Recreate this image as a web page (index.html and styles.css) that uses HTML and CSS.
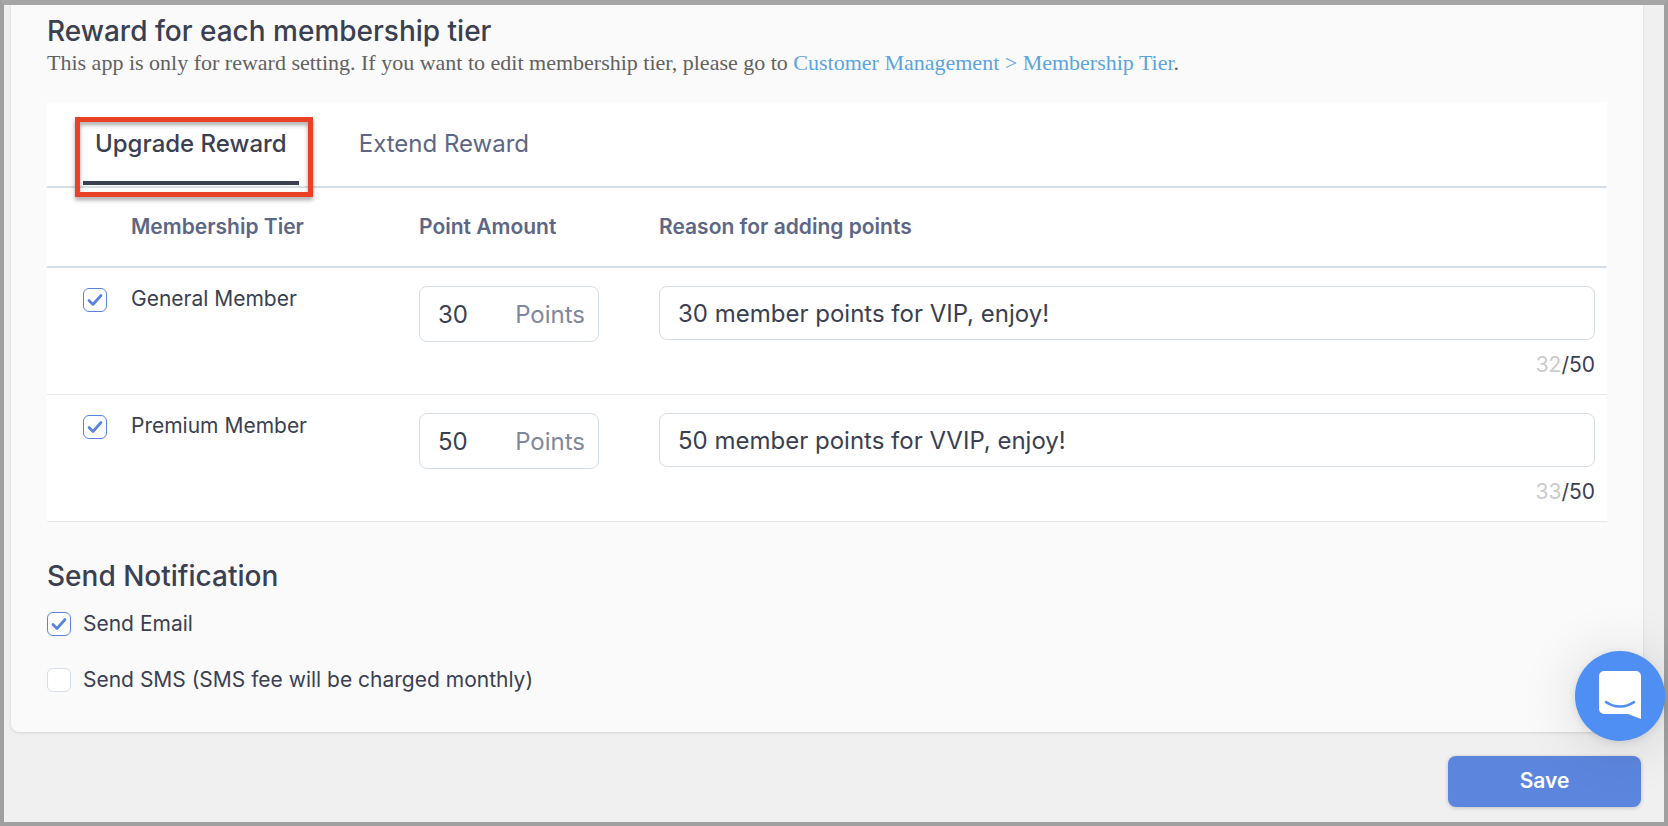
FILE: index.html
```html
<!DOCTYPE html>
<html lang="en">
<head>
  <meta charset="UTF-8" />
  <meta name="viewport" content="width=device-width, initial-scale=1" />
  <title>Membership Reward Settings</title>
  <link rel="stylesheet" href="styles.css">
</head>
<body>
  <main class="card">
    <section>
      <h2>Reward for each membership tier</h2>
      <p class="hint">This app is only for reward setting. If you want to edit membership tier, please go to <a href="#">Customer Management &gt; Membership Tier</a>.</p>

      <div class="reward-panel">
        <div class="tabs" role="tablist">
          <button class="tab active" type="button" role="tab" aria-selected="true">Upgrade Reward</button>
          <button class="tab" type="button" role="tab" aria-selected="false">Extend Reward</button>
        </div>

        <table>
          <thead>
            <tr>
              <th class="col-check"></th>
              <th class="col-tier">Membership Tier</th>
              <th class="col-points">Point Amount</th>
              <th>Reason for adding points</th>
            </tr>
          </thead>
          <tbody>
            <tr>
              <td class="col-check"><input class="checkbox" type="checkbox" id="tier-general" checked></td>
              <td><label for="tier-general">General Member</label></td>
              <td>
                <div class="point-box">
                  <input type="text" id="points-general" value="30" aria-label="General Member points">
                  <label for="points-general">Points</label>
                </div>
              </td>
              <td class="col-reason">
                <input class="reason" type="text" value="30 member points for VIP, enjoy!" maxlength="50" aria-label="Reason for General Member">
                <div class="counter"><span>32</span>/50</div>
              </td>
            </tr>
            <tr>
              <td class="col-check"><input class="checkbox" type="checkbox" id="tier-premium" checked></td>
              <td><label for="tier-premium">Premium Member</label></td>
              <td>
                <div class="point-box">
                  <input type="text" id="points-premium" value="50" aria-label="Premium Member points">
                  <label for="points-premium">Points</label>
                </div>
              </td>
              <td class="col-reason">
                <input class="reason" type="text" value="50 member points for VVIP, enjoy!" maxlength="50" aria-label="Reason for Premium Member">
                <div class="counter"><span>33</span>/50</div>
              </td>
            </tr>
          </tbody>
        </table>
      </div>
    </section>

    <section class="notification">
      <h2>Send Notification</h2>
      <div class="option">
        <input class="checkbox" type="checkbox" id="send-email" checked>
        <label for="send-email">Send Email</label>
      </div>
      <div class="option">
        <input class="checkbox" type="checkbox" id="send-sms">
        <label for="send-sms">Send SMS (SMS fee will be charged monthly)</label>
      </div>
    </section>
  </main>

  <footer>
    <button class="save-btn" type="button">Save</button>
  </footer>

  <button class="chat-btn" type="button" aria-label="Open chat">
    <svg width="42" height="48" viewBox="0 0 42 48">
      <path d="M5 0h32a5 5 0 0 1 5 5v43L29 43H5a5 5 0 0 1-5-5V5a5 5 0 0 1 5-5z" fill="#fff"/>
      <path d="M7 31c8 6 20 6 28 0" fill="none" stroke="#4f8ff3" stroke-width="2.6" stroke-linecap="round"/>
    </svg>
  </button>
</body>
</html>
```

FILE: styles.css
```css
* {
  box-sizing: border-box;
}
body {
  font-family: Inter, "Liberation Sans", sans-serif;
  font-size: 21px;
  line-height: 26px;
  background: #f0f0f0;
  margin: 0;
  color: #3a3f51;
  min-height: 100vh;
  border: 4px solid #a0a0a0;
  border-top: 5px solid #a6a6a6;
}
button, input {
  font-family: inherit;
  color: inherit;
}
h2 {
  margin: 0;
  font-size: 28px;
  line-height: 36px;
  font-weight: 500;
}

.card {
  margin: 0 21px 0 7px;
  padding: 8px 36px 39px;
  background: #fafafa;
  border-radius: 0 0 8px 8px;
  box-shadow: 0 1px 3px rgba(0,0,0,0.12);
}
.hint {
  margin: 0 0 25px;
  font-family: "Liberation Serif", serif;
  font-size: 22px;
  line-height: 28px;
  color: #616161;
}
.hint a {
  color: #5ba4de;
  text-decoration: none;
}

/* Tabs */
.reward-panel {
  background: white;
}
.tabs {
  display: flex;
  gap: 48px;
  padding: 0 36px 1px;
  border-bottom: 2px solid #d5dde6;
}
.tab {
  position: relative;
  height: 83px;
  padding: 4px 12px 0;
  background: none;
  border: none;
  border-bottom: 4px solid transparent;
  font-size: 24px;
  color: #5d6685;
  cursor: pointer;
}
.tab.active {
  color: #3a3f51;
  font-weight: 500;
  border-bottom-color: #3a3f51;
}
/* Red frame that marks the current tab */
.tab.active::after {
  content: "";
  position: absolute;
  top: 15px;
  right: -14px;
  bottom: -16px;
  left: -8px;
  border: 5px solid #ea4025;
  filter: drop-shadow(0 3px 2px rgba(0,0,0,0.35));
}

/* Tier table */
table {
  width: 100%;
  table-layout: fixed;
  border-collapse: separate;
  border-spacing: 0;
}
th {
  height: 80px;
  padding: 0;
  text-align: left;
  font-weight: 600;
  color: #5d6685;
  border-bottom: 2px solid #d5dde6;
}
td {
  padding: 18px 0 16px;
  vertical-align: top;
  border-bottom: 1px solid #e4e8ed;
}
.col-check {
  width: 84px;
  padding-left: 36px;
}
.col-tier {
  width: 288px;
}
.col-points {
  width: 240px;
}
.col-reason {
  padding-right: 12px;
}

.checkbox {
  appearance: none;
  display: block;
  flex: none;
  width: 24px;
  height: 24px;
  margin: 0;
  background: white;
  border: 1px solid #d5dde6;
  border-radius: 6px;
}
td .checkbox {
  margin-top: 2px;
}
.checkbox:checked {
  border-color: #5a83e0;
  background: white url("data:image/svg+xml,%3Csvg xmlns='http://www.w3.org/2000/svg' viewBox='0 0 22 22'%3E%3Cpath d='M5 11.5l4 4L17 6.5' fill='none' stroke='%235a83e0' stroke-width='2.7' stroke-linecap='round' stroke-linejoin='round'/%3E%3C/svg%3E");
}

.point-box {
  display: flex;
  align-items: center;
  width: 180px;
  height: 56px;
  padding: 1px 13px 0 18px;
  border: 1px solid #d5dde6;
  border-radius: 8px;
  font-size: 24px;
}
.point-box input {
  flex: 1;
  min-width: 0;
  padding: 0;
  border: none;
  outline: none;
  background: none;
  font-size: 24px;
}
.point-box label {
  color: #80879c;
}
.reason {
  display: block;
  width: 100%;
  height: 54px;
  padding: 0 18px;
  background: white;
  border: 1px solid #d5dde6;
  border-radius: 8px;
  font-size: 24px;
}
.counter {
  margin-top: 12px;
  text-align: right;
}
.counter span {
  color: #cbcbcb;
}

/* Notification */
.notification {
  margin-top: 36px;
}
.option {
  display: flex;
  align-items: center;
  gap: 12px;
  margin-top: 30px;
}
h2 + .option {
  margin-top: 17px;
}

footer {
  display: flex;
  justify-content: flex-end;
  padding: 24px 23px 11px;
}
.save-btn {
  width: 193px;
  height: 51px;
  padding: 0 0 3px;
  background: #5c86de;
  border: none;
  border-radius: 8px;
  color: white;
  font-size: 21px;
  font-weight: 600;
  box-shadow: 0 1px 4px rgba(0,0,0,0.2);
  cursor: pointer;
}
.chat-btn {
  position: fixed;
  right: 3px;
  bottom: 85px;
  display: flex;
  align-items: center;
  justify-content: center;
  width: 90px;
  height: 90px;
  padding: 0 0 2px;
  background: #4f8ff3;
  border: none;
  border-radius: 50%;
  box-shadow: 0 2px 10px rgba(0,0,0,0.1), 0 4px 60px rgba(0,0,0,0.14);
  cursor: pointer;
}
```
